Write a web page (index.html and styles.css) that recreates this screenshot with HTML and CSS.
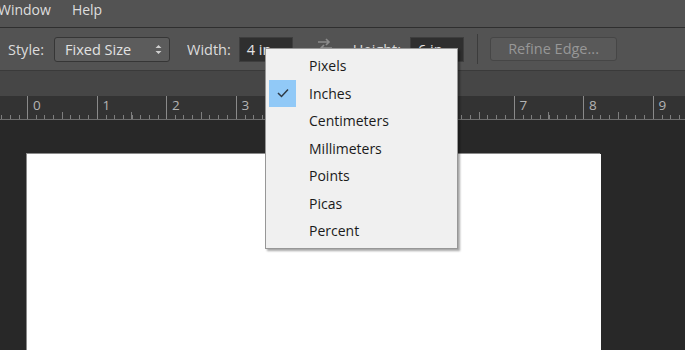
FILE: index.html
```html
<!DOCTYPE html>
<html lang="en">
<head>
  <meta charset="UTF-8" />
  <meta name="viewport" content="width=device-width, initial-scale=1.0"/>
  <title>Marquee Options</title>
  <link rel="stylesheet" href="styles.css">
</head>
<body>
  <div class="menubar">
    <span class="menu-item first">Window</span>
    <span class="menu-item">Help</span>
  </div>

  <div class="options">
    <span class="label">Style:</span>
    <div class="select">
      <span>Fixed Size</span>
      <svg class="updown" width="7" height="11" viewBox="0 0 7 11">
        <path d="M0.5 4 L3.5 1 L6.5 4 Z M0.5 7 L3.5 10 L6.5 7 Z" fill="#cfcfcf"/>
      </svg>
    </div>
    <span class="label width-label">Width:</span>
    <div class="field">4 in</div>
    <svg class="swap" width="16" height="16" viewBox="0 0 16 16">
      <path d="M1 5 H12 M9 2 L12 5 L9 8" stroke="#8c8c8c" stroke-width="1.6" fill="none"/>
      <path d="M15 11 H4 M7 8 L4 11 L7 14" stroke="#8c8c8c" stroke-width="1.6" fill="none"/>
    </svg>
    <span class="label height-label">Height:</span>
    <div class="field height-field">6 in</div>
    <div class="divider"></div>
    <div class="button">Refine Edge...</div>
  </div>

  <div class="tabstrip"></div>

  <div class="ruler">
    <div class="inch lead"><span></span></div>
    <div class="inch"><span>0</span></div>
    <div class="inch"><span>1</span></div>
    <div class="inch"><span>2</span></div>
    <div class="inch"><span>3</span></div>
    <div class="inch"><span>4</span></div>
    <div class="inch"><span>5</span></div>
    <div class="inch"><span>6</span></div>
    <div class="inch"><span>7</span></div>
    <div class="inch"><span>8</span></div>
    <div class="inch"><span>9</span></div>
  </div>

  <div class="workspace">
    <div class="document"></div>
  </div>

  <ul class="dropdown">
    <li>Pixels</li>
    <li class="checked">
      <span class="check">
        <svg width="12" height="10" viewBox="0 0 12 10">
          <path d="M1 5 L4.5 8.5 L11 1.5" stroke="#2e3a46" stroke-width="1.5" fill="none"/>
        </svg>
      </span>
      Inches
    </li>
    <li>Centimeters</li>
    <li>Millimeters</li>
    <li>Points</li>
    <li>Picas</li>
    <li>Percent</li>
  </ul>
</body>
</html>
```

FILE: styles.css
```css
body {
  margin: 0;
  width: 685px;
  height: 350px;
  overflow: hidden;
  background-color: #282828;
  font-family: "Open Sans", "Noto Sans", sans-serif;
  font-size: 14.5px;
  position: relative;
}

.menubar {
  height: 27px;
  background-color: #535353;
  border-bottom: 1px solid #2f2f2f;
  display: flex;
  align-items: flex-start;
  color: #dedede;
  font-size: 14px;
}

.menu-item {
  line-height: 20px;
  margin-right: 21px;
}

.menu-item.first {
  margin-left: -2px;
}

.options {
  height: 42px;
  background-color: #535353;
  border-bottom: 1px solid #3a3a3a;
  display: flex;
  align-items: center;
  padding-left: 8px;
  color: #dcdcdc;
}

.select {
  margin-left: 10px;
  flex: 0 0 116px;
  height: 25px;
  box-sizing: border-box;
  background-color: #5c5c5c;
  border: 1px solid #363636;
  border-radius: 3px;
  display: flex;
  align-items: center;
  justify-content: space-between;
  padding: 0 7px 0 10px;
  color: #e2e2e2;
}

.width-label {
  margin-left: 17px;
}

.field {
  margin-left: 8px;
  flex: 0 0 54px;
  height: 25px;
  box-sizing: border-box;
  background-color: #2f2f2f;
  border: 1px solid #3e3e3e;
  padding-left: 7px;
  line-height: 23px;
  color: #e4e4e4;
}

.height-field {
  margin-left: 9px;
}

.swap {
  margin-left: 24px;
  margin-top: -8px;
}

.height-label {
  margin-left: 20px;
}

.divider {
  margin-left: 13px;
  width: 1px;
  height: 30px;
  background-color: #3c3c3c;
}

.button {
  margin-left: 12px;
  flex: 0 0 127px;
  height: 24px;
  box-sizing: border-box;
  background-color: #595959;
  border: 1px solid #464646;
  border-radius: 3px;
  text-align: center;
  line-height: 22px;
  color: #979797;
}

.tabstrip {
  height: 25px;
  background-color: #464646;
}

.ruler {
  height: 23px;
  background-color: #333333;
  border-bottom: 1px solid #6e6e6e;
  display: flex;
  overflow: hidden;
}

.inch {
  flex: 0 0 69.5px;
  box-sizing: border-box;
  border-left: 1px solid #8a8a8a;
  position: relative;
  background-image: repeating-linear-gradient(to right, transparent 0, transparent 7.69px, #7e7e7e 7.69px, #7e7e7e 8.69px);
  background-size: 100% 4px;
  background-repeat: no-repeat;
  background-position: left bottom;
}

.inch::after {
  content: "";
  position: absolute;
  left: 33.75px;
  bottom: 0;
  width: 1px;
  height: 7px;
  background-color: #7e7e7e;
}

.inch.lead {
  margin-left: -42.5px;
}

.inch span {
  display: block;
  padding-left: 5px;
  color: #b4b4b4;
  font-size: 13.5px;
  line-height: 19px;
}

.workspace {
  padding: 34px 0 0 27px;
}

.document {
  width: 574px;
  height: 200px;
  background-color: #ffffff;
  box-shadow: -1px -1px 0 #8a8a8a;
}

.dropdown {
  position: absolute;
  left: 265px;
  top: 48px;
  width: 193px;
  margin: 0;
  padding: 3px 0;
  box-sizing: border-box;
  list-style: none;
  background-color: #f0f0f0;
  border: 1px solid #979797;
  box-shadow: 2px 2px 2px rgba(0, 0, 0, 0.35);
  font-size: 14px;
  color: #1a1a1a;
}

.dropdown li {
  height: 27.5px;
  line-height: 27.5px;
  padding-left: 43px;
  position: relative;
}

.check {
  position: absolute;
  left: 3px;
  top: 0;
  width: 27px;
  height: 27px;
  background-color: #91c9f7;
  display: flex;
  align-items: center;
  justify-content: center;
}
```
